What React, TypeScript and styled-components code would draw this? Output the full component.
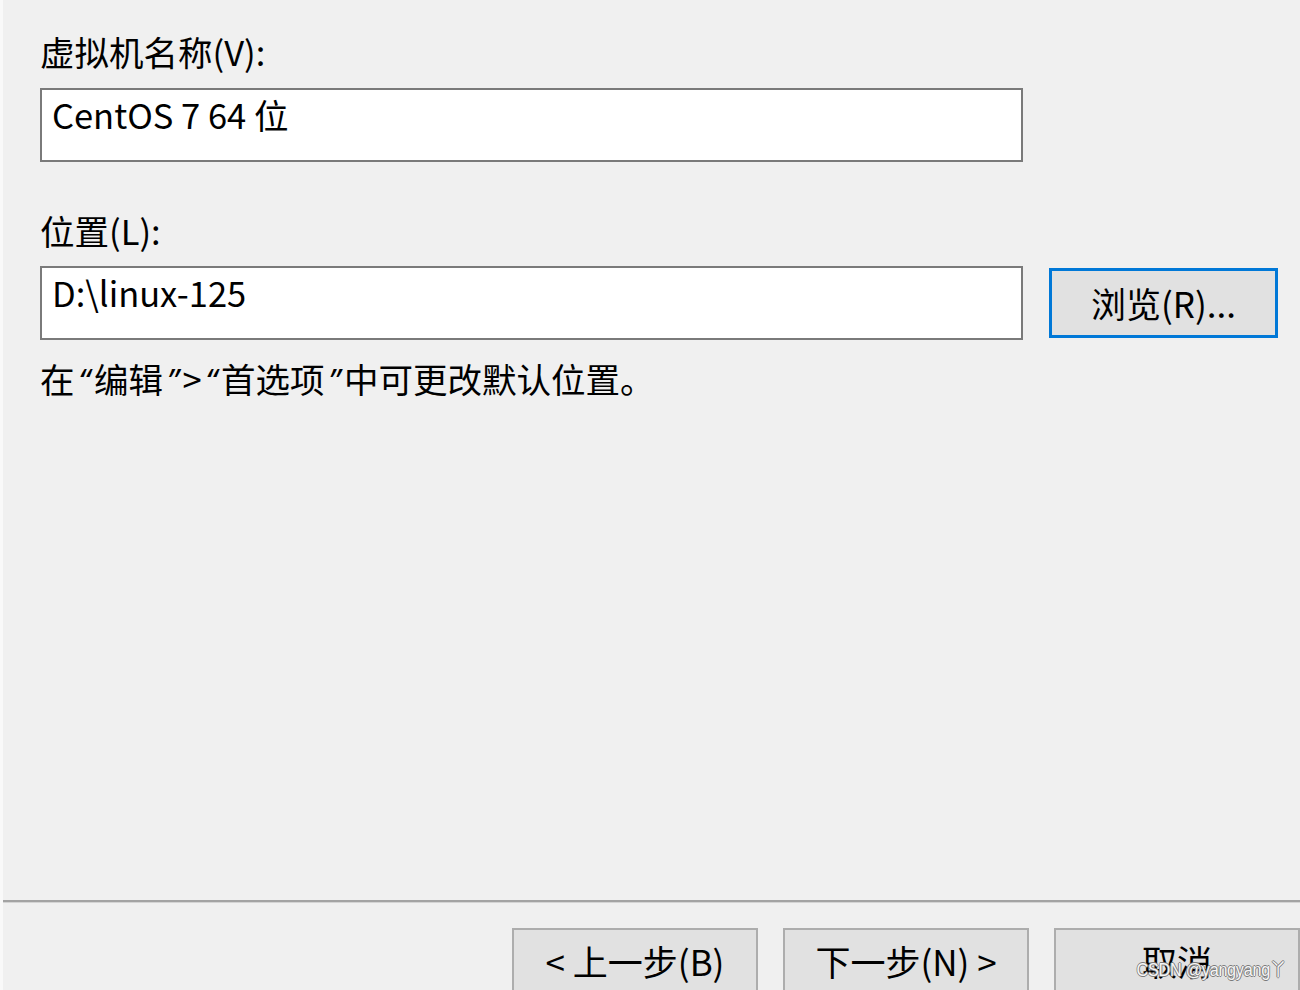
import React from 'react';
import styled, { createGlobalStyle } from 'styled-components';

const GlobalStyle = createGlobalStyle`
  html, body {
    margin: 0;
    padding: 0;
    background: #f0f0f0;
  }
  body {
    font-family: 'Noto Sans CJK SC', 'Noto Sans', sans-serif;
    color: #000;
  }
`;

const Window = styled.div`
  position: relative;
  width: 1300px;
  height: 990px;
  overflow: hidden;
  display: flex;
  flex-direction: column;
  background: #f0f0f0;
  border-left: 3px solid #f9f9f9;
  box-sizing: border-box;
`;

const Body = styled.div`
  flex: 1;
  display: flex;
  flex-direction: column;
  padding: 35px 0 0 37px;
`;

const Label = styled.div<{ $top?: number }>`
  font-size: 34.5px;
  line-height: 33px;
  margin-top: ${(p) => p.$top ?? 0}px;
  white-space: nowrap;
`;

// the dialog font draws the curly quotes narrow, not full-width
const Quote = styled.span`
  font-family: 'Noto Sans', sans-serif;
  font-style: italic;
  font-size: 32px;
  margin: 0 4px;
`;

const Row = styled.div<{ $top: number }>`
  display: flex;
  align-items: center;
  gap: 26px;
  margin-top: ${(p) => p.$top}px;
`;

const TextBox = styled.div`
  width: 983px;
  height: 74px;
  box-sizing: border-box;
  border: 2px solid #7a7a7a;
  background: #fff;
  padding: 8px 10px;
  font-size: 34.5px;
  line-height: 33px;
  white-space: nowrap;
`;

const Button = styled.div<{ $focused?: boolean }>`
  box-sizing: border-box;
  display: flex;
  align-items: center;
  justify-content: center;
  background: #e1e1e1;
  border: ${(p) => (p.$focused ? '3px solid #0078d7' : '2px solid #adadad')};
  font-size: 35px;
  line-height: 34px;
  white-space: nowrap;
`;

const BrowseButton = styled(Button)`
  width: 229px;
  height: 70px;
`;

const Footer = styled.div`
  height: 90px;
  flex-shrink: 0;
  border-top: 2px solid #a3a3a3;
  box-shadow: inset 0 1px 0 #d4d4d4;
  display: flex;
  justify-content: flex-end;
  gap: 25px;
  padding-top: 26px;
  box-sizing: border-box;
`;

const NavButton = styled(Button)`
  width: 246px;
  height: 66px;
`;

const Watermark = styled.div`
  position: absolute;
  right: 14px;
  bottom: 9px;
  font-family: 'Liberation Sans Narrow', 'Liberation Sans', 'Noto Sans CJK SC', sans-serif;
  font-size: 18px;
  letter-spacing: -0.3px;
  color: #f6f6f6;
  text-shadow: 1px 0 0 #7a7a7a, -1px 0 0 #7a7a7a, 0 1px 0 #7a7a7a, 0 -1px 0 #7a7a7a;
  transform: scaleX(0.9);
  transform-origin: right center;
`;

export default function App() {
  return (
    <>
      <GlobalStyle />
      <Window>
        <Body>
          <Label>虚拟机名称(V):</Label>
          <Row $top={20}>
            <TextBox>CentOS 7 64 位</TextBox>
          </Row>
          <Label $top={52}>位置(L):</Label>
          <Row $top={19}>
            <TextBox>D:\linux-125</TextBox>
            <BrowseButton $focused>浏览(R)...</BrowseButton>
          </Row>
          <Label $top={22}>
            在<Quote>“</Quote>编辑<Quote>”</Quote>&gt;<Quote>“</Quote>首选项<Quote>”</Quote>中可更改默认位置。
          </Label>
        </Body>
        <Footer>
          <NavButton>&lt; 上一步(B)</NavButton>
          <NavButton>下一步(N) &gt;</NavButton>
          <NavButton>取消</NavButton>
        </Footer>
        <Watermark>CSDN @yangyang丫</Watermark>
      </Window>
    </>
  );
}
